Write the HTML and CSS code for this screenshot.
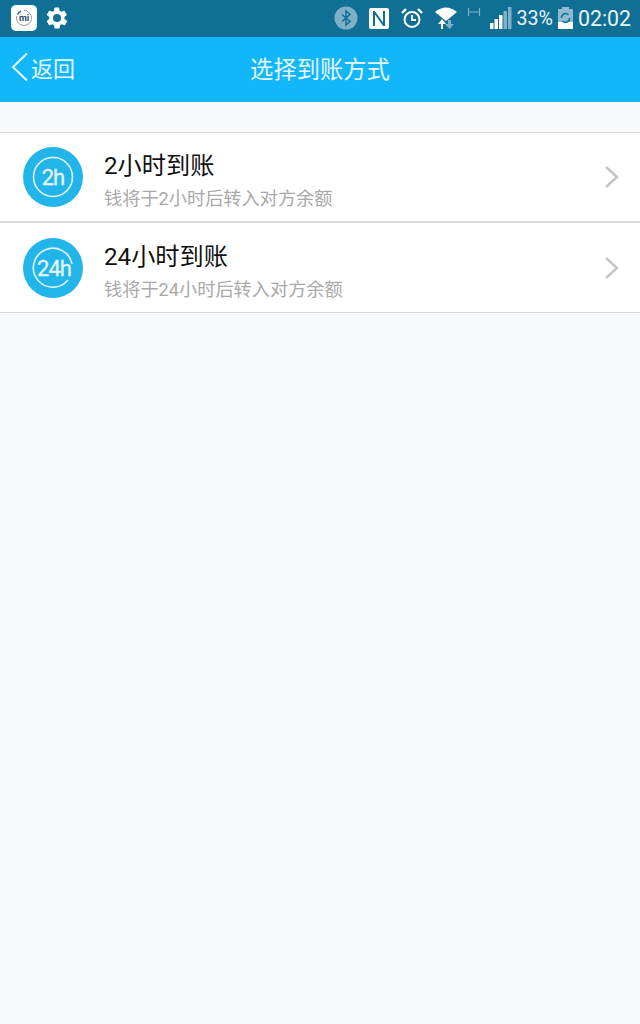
FILE: index.html
```html
<!DOCTYPE html>
<html lang="zh-CN">
<head>
    <meta charset="UTF-8">
    <meta name="viewport" content="width=device-width,initial-scale=1.0">
    <title>选择到账方式</title>
    <link rel="stylesheet" href="styles.css">
</head>
<body>
    <div class="status-bar">
        <div class="status-left">
            <div class="mi-icon">
                <svg width="26" height="26" viewBox="0 0 26 26">
                    <path d="M13 5.5a7.5 7.5 0 1 1-7.2 5.4" fill="none" stroke="#9a9a9a" stroke-width="1"/>
                    <path d="M6.5 9.5a7.5 7.5 0 0 1 3.5-3.4" fill="none" stroke="#0f6f95" stroke-width="1.6"/>
                    <text x="13" y="15.5" class="mi-text">mi</text>
                </svg>
            </div>
            <svg width="24" height="24" viewBox="0 0 24 24">
                <path fill="#fff" d="M19.4 13c.1-.3.1-.7.1-1s0-.7-.1-1l2.200-1.700c.2-.2.2-.4.1-.7l-2.100-3.600c-.1-.2-.4-.3-.6-.2l-2.600 1c-.5-.4-1.100-.8-1.800-1l-.4-2.700c0-.3-.2-.5-.5-.5H9.900c-.3 0-.5.2-.5.5l-.4 2.700c-.6.2-1.200.6-1.800 1l-2.600-1c-.2-.1-.5 0-.6.2L1.900 8.600c-.1.3-.1.5.1.7L4.300 11c0 .3-.1.7-.1 1s0 .7.1 1L2 14.700c-.2.2-.2.4-.1.7L4 19c.1.2.4.3.6.2l2.600-1c.5.4 1.100.8 1.800 1l.4 2.700c0 .3.2.5.5.5h4.200c.3 0 .5-.2.5-.5l.4-2.700c.6-.2 1.200-.6 1.800-1l2.600 1c.2.1.5 0 .6-.2l2.100-3.600c.1-.3.1-.5-.1-.7L19.400 13zM12 16a4 4 0 1 1 0-8 4 4 0 0 1 0 8z"/>
            </svg>
        </div>
        <div class="status-right">
            <svg class="ic-bt" width="24" height="24" viewBox="0 0 24 24">
                <circle cx="12" cy="12" r="11.5" fill="#7fb0c6"/>
                <path d="M8 8.500l8 7-4 3.500V5l4 3.500-8 7" fill="none" stroke="#0f6f95" stroke-width="1.5"/>
            </svg>
            <svg class="ic-nfc" width="20" height="21" viewBox="0 0 20 21">
                <rect width="20" height="21" rx="2" fill="#fff"/>
                <path d="M5 3v15M15 3v15M5 3.500l10 14" fill="none" stroke="#0f6f95" stroke-width="2"/>
            </svg>
            <svg class="ic-alarm" width="22" height="22" viewBox="0 0 22 22">
                <circle cx="11" cy="12.500" r="7.500" fill="none" stroke="#fff" stroke-width="2"/>
                <path d="M11 8v5h4" fill="none" stroke="#fff" stroke-width="1.8"/>
                <path d="M1 6l4-4M21 6l-4-4" stroke="#fff" stroke-width="2.4"/>
            </svg>
            <svg class="ic-wifi" width="22" height="24" viewBox="0 0 22 24">
                <path d="M0 6Q11 -3 22 6L11 15z" fill="#fff"/>
                <path d="M6 23v-5H3l4-5 4 5H8v5z" fill="#fff"/>
                <path d="M13 14h3v4h3l-4.500 5-4.500-5h3z" fill="#7fb0c6"/>
            </svg>
            <svg class="ic-h" width="14" height="10" viewBox="0 0 14 10">
                <path d="M1.500 1v8M12.500 1v8M1.500 5h11" fill="none" stroke="#7fb0c6" stroke-width="1.2"/>
            </svg>
            <svg class="ic-signal" width="22" height="22" viewBox="0 0 22 22">
                <rect x="0" y="16" width="3.5" height="6" fill="#fff"/>
                <rect x="4.500" y="12" width="3.5" height="10" fill="#fff"/>
                <rect x="9" y="8" width="3.5" height="14" fill="#fff"/>
                <rect x="13.500" y="4" width="3.5" height="18" fill="#7fb0c6"/>
                <rect x="18" y="0" width="3.5" height="22" fill="#7fb0c6"/>
            </svg>
            <span class="pct">33%</span>
            <svg class="ic-batt" width="15" height="22" viewBox="0 0 15 22">
                <rect x="4" y="0" width="7" height="2" fill="#8fb9cc"/>
                <rect x="0" y="2" width="15" height="20" rx="1" fill="#8fb9cc"/>
                <rect x="0" y="15" width="15" height="7" fill="#fff"/>
                <path d="M3.500 11a4 4 0 0 1 7-3M11.500 11a4 4 0 0 1-7 3" fill="none" stroke="#0f6f95" stroke-width="1.5"/>
            </svg>
            <span class="clock">02:02</span>
        </div>
    </div>

    <header class="nav">
        <div class="back">
            <svg width="18" height="30" viewBox="0 0 18 30">
                <path d="M16 1.500L2 15l14 13.500" fill="none" stroke="#e6f7ff" stroke-width="2"/>
            </svg>
            <span>返回</span>
        </div>
        <div class="nav-title">选择到账方式</div>
    </header>

    <main class="list">
        <div class="row">
            <div class="badge">
                <svg width="60" height="60" viewBox="0 0 60 60">
                    <circle cx="30" cy="30" r="30" fill="#22b5ea"/>
                    <circle cx="30" cy="30" r="19.5" fill="none" stroke="#e4f6fd" stroke-width="1.6"/>
                    <text x="30" y="38" class="badge-text">2h</text>
                </svg>
            </div>
            <div class="row-text">
                <div class="row-title">2小时到账</div>
                <div class="row-sub">钱将于2小时后转入对方余额</div>
            </div>
            <svg class="chevron" width="16" height="24" viewBox="0 0 16 24">
                <path d="M2 2l11 10L2 22" fill="none" stroke="#c4c4c4" stroke-width="2.4"/>
            </svg>
        </div>
        <div class="row">
            <div class="badge">
                <svg width="60" height="60" viewBox="0 0 60 60">
                    <circle cx="30" cy="30" r="30" fill="#22b5ea"/>
                    <path d="M45 42A19.500 19.500 0 1 1 49 26" fill="none" stroke="#e4f6fd" stroke-width="1.6"/>
                    <text x="31" y="38" class="badge-text">24h</text>
                </svg>
            </div>
            <div class="row-text">
                <div class="row-title">24小时到账</div>
                <div class="row-sub">钱将于24小时后转入对方余额</div>
            </div>
            <svg class="chevron" width="16" height="24" viewBox="0 0 16 24">
                <path d="M2 2l11 10L2 22" fill="none" stroke="#c4c4c4" stroke-width="2.4"/>
            </svg>
        </div>
    </main>
</body>
</html>
```

FILE: styles.css
```css
html,body{
    margin:0;
    padding:0;
}
body{
    width:640px;
    height:1024px;
    overflow:hidden;
    background-color:#f7f9fb;
    font-family:"Roboto","Noto Sans CJK SC",sans-serif;
}
.status-bar{
    height:37px;
    background-color:#0f6f95;
    display:flex;
    align-items:center;
    justify-content:space-between;
    padding:0 9px 1px 11px;
    box-sizing:border-box;
    color:#e8f3f8;
}
.status-left{
    display:flex;
    align-items:center;
    gap:8px;
}
.mi-icon{
    width:26px;
    height:26px;
    background-color:#fff;
    border-radius:5px;
}
.mi-text{
    font-size:9px;
    font-weight:700;
    fill:#1a4a60;
    text-anchor:middle;
}
.status-right{
    display:flex;
    align-items:center;
}
.ic-bt{
    margin-right:11px;
}
.ic-nfc{
    margin-right:12px;
}
.ic-alarm{
    margin-right:12px;
}
.ic-wifi{
    margin-right:10px;
}
.ic-h{
    margin:-12px 9px 0 0;
}
.ic-signal{
    margin-right:5px;
}
.pct{
    font-size:19.6px;
    margin-right:5px;
}
.ic-batt{
    margin-right:5px;
}
.clock{
    font-size:21.3px;
}
.nav{
    height:65px;
    padding-bottom:4px;
    box-sizing:border-box;
    background-color:#12b7f9;
    display:flex;
    align-items:center;
    justify-content:center;
    position:relative;
    color:#e6f7ff;
}
.back{
    position:absolute;
    left:11px;
    top:14px;
    display:flex;
    align-items:center;
    gap:2px;
    font-size:22px;
}
.nav-title{
    font-size:23.3px;
}
.list{
    margin-top:30px;
    background-color:#fff;
    border-top:1px solid #d9d9d9;
}
.row{
    height:89px;
    display:flex;
    align-items:center;
    padding-left:23px;
    border-bottom:1px solid #d9d9d9;
    background-color:#fff;
}
.row:first-child{
    border-bottom-width:2px;
    height:88px;
}
.badge{
    width:60px;
    height:60px;
    margin-right:21px;
}
.badge svg{
    display:block;
}
.badge-text{
    font-size:22px;
    fill:#e4f6fd;
    stroke:#e4f6fd;
    stroke-width:.3px;
    text-anchor:middle;
    letter-spacing:-1px;
}
.row-text{
    flex:1;
    padding-top:7px;
}
.row-title{
    font-size:24.2px;
    line-height:32px;
    color:#111;
}
.row-sub{
    margin-top:5px;
    font-size:18.2px;
    line-height:24px;
    color:#a9a9a9;
}
.chevron{
    margin-right:20px;
}
```
